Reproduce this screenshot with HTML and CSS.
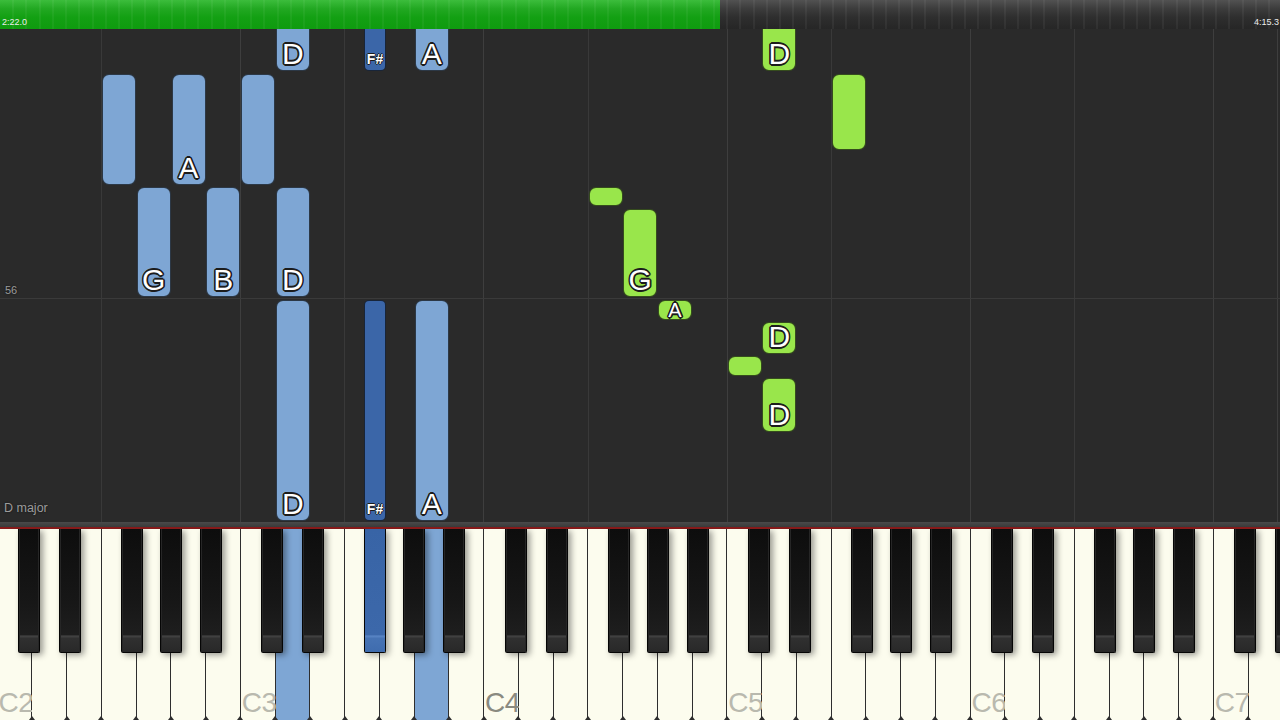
FILE: index.html
```html
<!DOCTYPE html>
<html>
<head>
<meta charset="utf-8">
<title>Piano roll</title>
<link rel="stylesheet" href="styles.css">
</head>
<body>
<div class="screen">
  <div class="topbar">
    <div class="played"><span class="time">2:22.0</span></div>
    <div class="remaining"><span class="time end">4:15.3</span></div>
  </div>

  <div class="roll">
    <span class="roll-label note-num">56</span>
    <span class="roll-label key-sig">D major</span>

    <!-- left hand (blue) -->
    <div class="note blue" style="left:275.75px;top:-10px;height:52px"><span class="lbl">D</span></div>
    <div class="note dark" style="left:364.25px;top:-10px;height:52px"><span class="lbl sm">F#</span></div>
    <div class="note blue" style="left:414.75px;top:-10px;height:52px"><span class="lbl">A</span></div>

    <div class="note blue" style="left:102px;top:45px;height:111px"></div>
    <div class="note blue" style="left:171.5px;top:45px;height:111px"><span class="lbl">A</span></div>
    <div class="note blue" style="left:241px;top:45px;height:111px"></div>

    <div class="note blue" style="left:136.75px;top:158px;height:110px"><span class="lbl">G</span></div>
    <div class="note blue" style="left:206.25px;top:158px;height:110px"><span class="lbl">B</span></div>
    <div class="note blue" style="left:275.75px;top:158px;height:110px"><span class="lbl">D</span></div>

    <div class="note blue" style="left:275.75px;top:271px;height:221px"><span class="lbl">D</span></div>
    <div class="note dark" style="left:364.25px;top:271px;height:221px"><span class="lbl sm">F#</span></div>
    <div class="note blue" style="left:414.75px;top:271px;height:221px"><span class="lbl">A</span></div>

    <!-- right hand (green) -->
    <div class="note green" style="left:762.25px;top:-10px;height:52px"><span class="lbl">D</span></div>
    <div class="note green" style="left:831.75px;top:45px;height:76px"></div>
    <div class="note green" style="left:588.5px;top:158px;height:19px"></div>
    <div class="note green" style="left:623.25px;top:180px;height:88px"><span class="lbl">G</span></div>
    <div class="note green" style="left:658px;top:271px;height:20px"><span class="lbl md">A</span></div>
    <div class="note green" style="left:762.25px;top:293px;height:32px"><span class="lbl">D</span></div>
    <div class="note green" style="left:727.5px;top:327px;height:20px"></div>
    <div class="note green" style="left:762.25px;top:349px;height:54px"><span class="lbl">D</span></div>
  </div>

  <div class="divider"></div>

  <div class="keyboard">
    <div class="keys">
      <div class="octave">
        <div class="white"><span class="clabel">C2</span></div>
        <div class="white"></div><div class="white"></div><div class="white"></div>
        <div class="white"></div><div class="white"></div><div class="white"></div>
        <div class="black cs"></div><div class="black ds"></div>
        <div class="black fs"></div><div class="black gs"></div><div class="black as"></div>
      </div>
      <div class="octave">
        <div class="white"><span class="clabel">C3</span></div>
        <div class="white pressed"></div><div class="white"></div><div class="white"></div>
        <div class="white"></div><div class="white pressed"></div><div class="white"></div>
        <div class="black cs"></div><div class="black ds"></div>
        <div class="black fs pressed"></div><div class="black gs"></div><div class="black as"></div>
      </div>
      <div class="octave">
        <div class="white"><span class="clabel mid">C4</span></div>
        <div class="white"></div><div class="white"></div><div class="white"></div>
        <div class="white"></div><div class="white"></div><div class="white"></div>
        <div class="black cs"></div><div class="black ds"></div>
        <div class="black fs"></div><div class="black gs"></div><div class="black as"></div>
      </div>
      <div class="octave">
        <div class="white"><span class="clabel">C5</span></div>
        <div class="white"></div><div class="white"></div><div class="white"></div>
        <div class="white"></div><div class="white"></div><div class="white"></div>
        <div class="black cs"></div><div class="black ds"></div>
        <div class="black fs"></div><div class="black gs"></div><div class="black as"></div>
      </div>
      <div class="octave">
        <div class="white"><span class="clabel">C6</span></div>
        <div class="white"></div><div class="white"></div><div class="white"></div>
        <div class="white"></div><div class="white"></div><div class="white"></div>
        <div class="black cs"></div><div class="black ds"></div>
        <div class="black fs"></div><div class="black gs"></div><div class="black as"></div>
      </div>
      <div class="octave">
        <div class="white"><span class="clabel">C7</span></div>
        <div class="white"></div>
        <div class="black cs"></div><div class="black ds"></div>
      </div>
    </div>
  </div>
</div>
</body>
</html>
```

FILE: styles.css
```css
html, body {
  margin: 0;
  padding: 0;
  background: #000;
}

.screen {
  width: 1280px;
  height: 720px;
  overflow: hidden;
  display: flex;
  flex-direction: column;
  font-family: "Liberation Sans", Arial, sans-serif;
}

/* ---------- top progress bar ---------- */
.topbar {
  position: relative;
  display: flex;
  height: 29px;
  flex: none;
}
.topbar::after {
  content: "";
  position: absolute;
  inset: 0;
  background-image: repeating-linear-gradient(90deg,
      transparent 0 12.2px,
      rgba(255, 255, 255, 0.09) 12.2px 13.22px);
  background-position: 0.5px 0;
  pointer-events: none;
}
.played {
  width: 720px;
  flex: none;
  display: flex;
  align-items: flex-end;
  background: linear-gradient(#3cbd3c 0, #22a822 30%, #13a013 60%, #0f9b0f 100%);
}
.remaining {
  flex: 1;
  display: flex;
  align-items: flex-end;
  justify-content: flex-end;
  background: linear-gradient(#525252 0, #3c3c3c 30%, #2e2e2e 60%, #262626 100%);
}
.time {
  position: relative;
  z-index: 1;
  font-size: 9px;
  line-height: 9px;
  color: #ececec;
  padding: 0 0 2px 2px;
  white-space: nowrap;
}
.time.end {
  padding: 0 1px 2px 0;
}

/* ---------- falling-note roll ---------- */
.roll {
  position: relative;
  height: 493px;
  flex: none;
  overflow: hidden;
  background-color: #2a2a2a;
  background-image:
    linear-gradient(to bottom, transparent 269px, #3a3a3a 269px 270px, transparent 270px),
    repeating-linear-gradient(90deg,
      #3e3e3e 0 1px,
      transparent 1px 104.25px,
      #393939 104.25px 105.25px,
      transparent 105.25px 243.25px);
  background-position: 0 0, -3px 0;
}

.roll-label {
  position: absolute;
  color: #9c9c9c;
  text-shadow: 0 0 2px #111;
  white-space: nowrap;
}
.note-num {
  left: 5px;
  top: 255px;
  font-size: 11px;
}
.key-sig {
  left: 4px;
  top: 472px;
  font-size: 12.5px;
}

.note {
  position: absolute;
  box-sizing: border-box;
  width: 34px;
  border: 1px solid rgba(10, 10, 10, 0.7);
  border-radius: 7px;
  display: flex;
  flex-direction: column;
  justify-content: flex-end;
  align-items: center;
}
.note.blue {
  background: #7ea6d4;
}
.note.dark {
  width: 21.5px;
  border-radius: 5px;
  background: #3b66a8;
}
.note.green {
  background: #99e64b;
}

.lbl {
  font-size: 30px;
  line-height: 30px;
  padding-bottom: 1.5px;
  color: #fff;
  text-shadow:
    -1.6px 0 #1c1c1c, 1.6px 0 #1c1c1c, 0 -1.6px #1c1c1c, 0 1.6px #1c1c1c,
    -1.2px -1.2px #1c1c1c, 1.2px -1.2px #1c1c1c, -1.2px 1.2px #1c1c1c, 1.2px 1.2px #1c1c1c;
}
.lbl.sm {
  font-size: 14px;
  line-height: 14px;
  font-weight: bold;
  padding-bottom: 4px;
  text-shadow:
    -1px 0 #1c1c1c, 1px 0 #1c1c1c, 0 -1px #1c1c1c, 0 1px #1c1c1c;
}
.lbl.md {
  font-size: 20px;
  line-height: 20px;
  padding-bottom: 0;
  margin-bottom: -1px;
}

/* ---------- divider above the keyboard ---------- */
.divider {
  height: 5px;
  flex: none;
  background: linear-gradient(#4a4a4a, #3a3a3a);
  border-bottom: 2px solid #861a1a;
}

/* ---------- keyboard ---------- */
.keyboard {
  height: 191px;
  flex: none;
  overflow: hidden;
  background: #fcfcee;
}
.keys {
  display: flex;
  height: 100%;
  margin-left: -2.5px;
}
.octave {
  position: relative;
  display: flex;
  flex: none;
  height: 100%;
}
.white {
  position: relative;
  width: 34.75px;
  flex: none;
  height: 100%;
  box-sizing: border-box;
  border-right: 1px solid #2e2e2e;
  background: #fcfcee;
  display: flex;
  flex-direction: column;
  justify-content: flex-end;
}
.white::after {
  content: "";
  position: absolute;
  z-index: 1;
  right: -3.5px;
  bottom: 0;
  border-left: 3px solid transparent;
  border-right: 3px solid transparent;
  border-bottom: 4px solid #2e2e2e;
}
.white.pressed {
  background: #7ea6d4;
}
.clabel {
  font-size: 28px;
  line-height: 28px;
  margin: 0 0 3px 1px;
  color: #b9b9ae;
  letter-spacing: -0.5px;
  white-space: nowrap;
}
.clabel.mid {
  color: #8a8a80;
}

.black {
  position: absolute;
  top: 0;
  z-index: 2;
  width: 22px;
  height: 124px;
  box-sizing: border-box;
  border: 1px solid #050505;
  border-top: 0;
  border-radius: 0 0 2px 2px;
  background: linear-gradient(to bottom,
      #0d0d0d 0, #171717 60%, #1e1e1e 86%,
      #444 87%, #303030 89%, #282828 100%);
  box-shadow: 3px 2px 6px rgba(0, 0, 0, 0.4), inset 1px 0 0 #262626, inset -1px 0 0 #262626;
}
.black.pressed {
  background: linear-gradient(to bottom,
      #3864a6 0, #3c68aa 86%, #5a86c6 87%, #4673b4 89%, #3f6cae 100%);
  box-shadow: 3px 2px 6px rgba(0, 0, 0, 0.35);
}
.cs { left: 20.5px; }
.ds { left: 61.5px; }
.fs { left: 123.5px; }
.gs { left: 162.5px; }
.as { left: 202.5px; }
```
